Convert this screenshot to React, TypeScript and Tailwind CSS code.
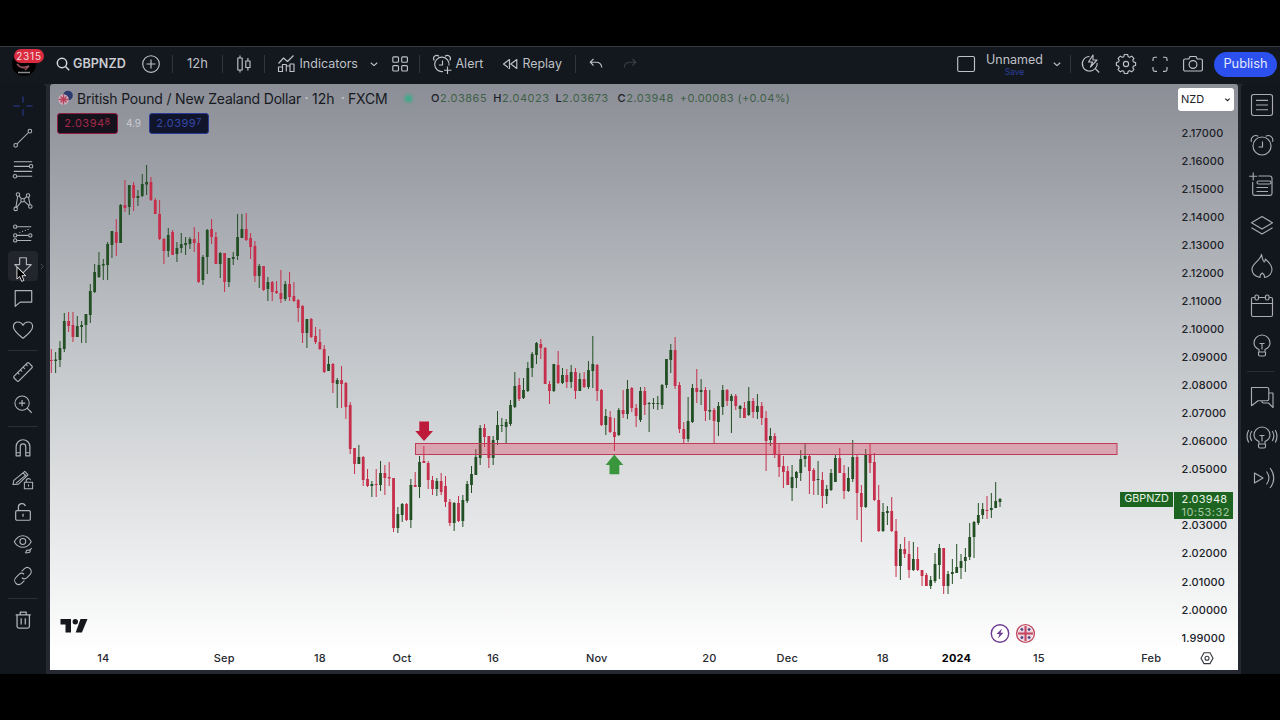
import type { ReactNode } from 'react'

// One candle per entry: direction (u = up, d = down), high, body top, body bottom, low
const CANDLES = `
d 349 360 361 373|u 352 359.5 361 373|u 341 348 360 367|u 313 321 349 352|d 312 321 326 332|d 312 325 337 342
u 316 326 337 337|u 321 325 327 343|u 314 314 325 343|u 284 291 315 323|u 264 272 292 293|u 252 265 277 278
u 259 264 265.5 280|u 242 244 265 280|u 231 231 245 258|d 219 232 243 256|u 204 205 243 243|d 180 205 208 212
u 185 185 207 215|d 182 185 198 211|u 190 196 198 206|u 174 184 196 197|u 165 182 184.5 195|d 177 182 200 201
d 198 200 214 214|d 200 214 239 240|d 238 239 251 264|u 228 235 251 257|d 230 232 255 255|u 242 248 254 262
u 233 244 248 253|u 237 243 245 255|u 237 239 244 249|d 227 239 243 252|d 232 243 282 283|u 255 257 280 285
u 229 230 257 274|d 219 229 237 244|d 232 237 264 264|u 252 253 264 278|d 253 253 282 292|u 258 258 282 287
u 252 257 259 265|u 214 237 256 260|u 214 229 238 238|d 213 229 240 241|d 233 238 247 259|d 241 246 276 282
u 264 266 276 288|d 266 266 290 291|u 277 282 289 301|d 281 282 292 301|d 281 291 293 294|d 270 293 299 303
u 281 284 299 301|d 272 284 297 301|d 282 296 301 302|d 299 300 308 322|d 305 306 333 343|u 319 319 333 348
d 318 319 337 338|d 327 336 342 344|d 329 342 349 350|d 345 349 372 373|u 356 364 371 371|d 363 364 383 393
u 378 380 384 408|d 366 380 384 408|d 382 383 407 419|d 402 405 449 454|d 448 448 464 474|u 445 457 464 464
d 456 457 480 486|d 469 479 486 487|u 481 484 486 497|d 469 484 485 497|u 461 473 485 491|d 465 473 478 495
d 462 477 478.5 486|d 478 478 528 532|u 507 514 528 533|u 503 504 515 522|d 503 504 520 521|u 479 485 520 528
d 472 485 487 487|u 456 462 487 498|d 446 461 463 463|d 461 463 480 489|d 476 480 489 495|u 478 481 489 496
d 473 481 492 495|d 476 486 502 507|d 499 502 523 526|u 502 503 523 531|d 496 503 521 522|u 495 500 521 527
u 481 484 501 503|u 466 474 485 493|u 449 457 475 475|u 425 428 458 465|d 424 428 437 447|d 436 436 458 468
u 436 440 458 465|u 411 425 440 445|u 418 425 426 432|u 419 422 427 443|u 400 405 424 426|u 372 386 407 408
d 378 385 399 401|u 378 390 398 399|u 362 368 391 392|u 352 354 368 377|u 342 343 355 364|d 339 344 348 359
d 347 348 384 384|d 381 384 391 404|u 364 364 391 392|d 351 365 383 384|u 368 375 383 384|d 369 375 382 388
u 365 372 382 388|d 368 372 391 399|u 373 379 391 391|d 372 379 387 388|u 361 370 387 389|u 336 364 371 388
d 364 365 391 401|d 389 390 425 426|u 409 416 425 435|d 411 417 432 433|d 418 432 437 451|u 408 410 435 436
d 390 410 414 418|u 380 389 414 419|d 387 388 408 412|d 404 408 416 427|u 387 391 420 422|d 387 391 405 415
u 402 403 404 432|u 398 403 404 409|u 396 403 404 410|u 384 385 405 409|u 359 359 385 388|u 344 350 360 373
d 337 350 386 389|d 382 385 429 433|d 422 429 439 444|u 397 421 439 442|u 384 388 422 423|d 369 388 392 403
u 379 390 392 405|d 387 390 411 421|u 390 410 411.5 420|d 408 410 421 443|u 402 406 422 436|u 385 390 407 415
d 389 390 401 406|u 394 396 401 433|d 394 396 406 410|u 405 406 409 418|d 402 408 418 418|u 387 401 415 416
d 398 401 412 418|u 394 406 412 419|d 402 406 418 425|d 411 418 441 471|u 428 436 440 446|d 433 436 455 458
d 444 454 467 477|d 456 466 472 488|d 466 471 485 485|u 465 477 488 501|u 471 472 478 488|u 450 459 473 481
u 444 456 459 467|d 455 456 471 494|d 468 470 481 495|u 461 479 480 495|d 472 480 496 508|u 485 489 496 504
u 469 473 490 491|u 454 458 482 482|d 448 458 473 473|d 465 473 491 499|u 467 478 491 492|u 440 457 479 482
d 455 457 493 520|d 485 493 507 542|u 449 454 507 508|d 443 454 463 473|d 453 462 500 501|d 485 500 531 532
u 503 512 531 532|u 506 511 513 525|d 497 511 531 532|d 519 531 566 577|u 544 549 566 580|d 537 549 554 558
d 541 554 570 578|u 542 559 570 571|d 547 559 570 571|d 570 570 576 586|d 573 575 586 586|u 576 580 586 589
u 553 564 581 583|u 544 548 565 579|d 548 548 586 594|u 571 574 586 594|u 559 572 574 584|u 544 567 573 573
u 554 561 568 579|u 548 557 561 572|u 523 537 557 560|u 521 522 537 558|u 503 515 523 525|u 503 509 515 519
d 496 510 511 519|u 493 508 510 518|u 482 501 508 508|u 498 499 502 507`
  .trim()
  .split(/[|\n]/)
  .map((row) => {
    const [dir, ...values] = row.split(' ')
    const [high, top, bottom, low] = values.map(Number)
    return { up: dir === 'u', high, top, bottom, low }
  })

const FIRST_X = 51.3
const STEP_X = 4.332

const PRICES = Array.from({ length: 19 }, (_, i) => (2.17 - i * 0.01).toFixed(5))

const DATES = [
  { x: 103.3, label: '14' },
  { x: 224.3, label: 'Sep' },
  { x: 320, label: '18' },
  { x: 402, label: 'Oct' },
  { x: 493.2, label: '16' },
  { x: 596.8, label: 'Nov' },
  { x: 709.5, label: '20' },
  { x: 787.3, label: 'Dec' },
  { x: 883, label: '18' },
  { x: 956.5, label: '2024', bold: true },
  { x: 1038.8, label: '15' },
  { x: 1151.3, label: 'Feb' },
]

const OHLC = [
  ['O', '2.03865'],
  ['H', '2.04023'],
  ['L', '2.03673'],
  ['C', '2.03948'],
]

interface IconProps {
  children: ReactNode
  className?: string
}

function Icon({ children, className = 'h-6 w-6' }: IconProps) {
  return (
    <svg
      viewBox="0 0 24 24"
      className={`shrink-0 overflow-visible ${className}`}
      fill="none"
      stroke="currentColor"
      strokeWidth={1.15}
      strokeLinejoin="round"
    >
      {children}
    </svg>
  )
}

const Chevron = () => <path d="M8.8 10.8 12 13.6l3.2-2.8" />

const Bulb = () => (
  <path d="M9 18v-2.400C6.300 14.300 4 12 4 9a8 8 0 0 1 16 0c0 3-2.300 5.300-5 6.600V18zM8.500 18v2.500c0 .8.7 1.500 1.500 1.500h4c.8 0 1.500-.7 1.500-1.500V18M12 15.500V9.500M9.500 9.500h5" />
)

const AlarmClock = () => (
  <>
    <circle cx="12" cy="13" r="9" />
    <path d="M12.500 8.500V14H8.500M1.500 8.800C0 4.500 4.500 1 8.300 3.300M22.500 8.800C24 4.500 19.500 1 15.700 3.300" />
  </>
)

const UnionJack = () => (
  <>
    <circle cx="12" cy="12" r="7.500" fill="#efd5dc" stroke="none" />
    <path d="M7.500 7l1.800 1.800M16.500 7l-1.800 1.800M7.500 17l1.800-1.800M16.500 17l-1.800-1.800" stroke="#4b4580" strokeWidth="2.400" />
    <path d="M12 4.500v15M4.500 12h15" stroke="#c4455f" strokeWidth="2" />
  </>
)

const LEFT_TOOLS: ReactNode[][] = [
  [
    <g key="cross" stroke="#2c3f94"><path d="M12 1.500v7M12 15.500v7M1.500 12h7M15.500 12h7" /></g>,
    <g key="line"><circle cx="4" cy="20" r="2" /><circle cx="19.500" cy="4.500" r="2" /><path d="M5.500 18.500 18 6" /></g>,
    <g key="fib"><path d="M2 3h20M2 8h17M2 13.500h20M5 18.800h17" strokeWidth="1.300" /><circle cx="20.800" cy="8" r="1.900" /><circle cx="3.200" cy="18.800" r="1.900" /></g>,
    <g key="pattern"><circle cx="6.500" cy="3.800" r="1.900" /><circle cx="17.500" cy="4.800" r="1.900" /><circle cx="11.500" cy="10" r="1.900" /><circle cx="4" cy="19.500" r="1.900" /><circle cx="20" cy="17" r="1.900" /><path d="M6.200 5.800 4.300 17.500M7.800 5.300l2.500 3.200M13 8.700l3-2.500M18 6.700l1.700 8.400M10.200 11.400l-5 6.500M13.200 11l5.200 4.700" /></g>,
    <g key="forecast"><circle cx="3.500" cy="4" r="1.800" /><circle cx="3.500" cy="13.500" r="1.800" /><circle cx="20" cy="13.500" r="1.800" /><circle cx="3.500" cy="19" r="1.800" /><path d="M5.500 4H21M5.500 13.500h12.500M5.500 19H21" /><path d="M8 10.500 20 6" strokeDasharray="1.200 2" /></g>,
    <g key="arrow"><path d="M8.300 3h7.400v7.500H21L12 19.500l-9-9h5.300z" strokeWidth="1.300" /></g>,
    <g key="note"><path d="M3.500 4h18v12.500H9L3.500 21z" strokeWidth="1.300" /></g>,
    <g key="heart"><path d="M12 21C7 17 1.500 13 1.500 8.200 1.500 5.300 3.700 3.300 6.500 3.300c2.300 0 4.300 1.300 5.500 3.600 1.200-2.300 3.200-3.600 5.500-3.600 2.800 0 5 2 5 4.900C22.500 13 17 17 12 21z" strokeWidth="1.300" /></g>,
  ],
  [
    <g key="ruler"><rect x="0.500" y="8.300" width="23" height="7.400" rx="1.500" transform="rotate(-45 12 12)" strokeWidth="1.300" /><path d="M6 12.500l2 2M9 9.500l2 2M12 6.500l2 2M15 3.500l2 2" /></g>,
    <g key="zoom"><circle cx="11" cy="11" r="7.800" /><path d="m16.500 16.500 5 5M11 7.500v7M7.500 11h7" strokeWidth="1.300" /></g>,
  ],
  [
    <g key="magnet"><path d="M4.500 20.500V10.500a7.500 7.500 0 0 1 15 0v10h-4.500V10.500a3 3 0 0 0-6 0v10zM4.500 17.200H9M15 17.200h4.500" strokeWidth="1.300" /></g>,
    <g key="pencil"><path d="m1 17 1-4.500L14 2.500l3.500 4L7 16.500zM4.500 15.500 15.500 6.500M12 4l3.500 4" /><rect x="13.500" y="14.500" width="9" height="7" /><path d="M15.500 14.500v-1.800a2.400 2.400 0 0 1 4.700-.5M18 17v2" /></g>,
    <g key="lock"><rect x="4" y="10.500" width="16" height="10.500" rx="1.500" strokeWidth="1.300" /><path d="M7 10.500V7a3.900 3.900 0 0 1 7.600-1.500M12 14v3.200" strokeWidth="1.400" /></g>,
    <g key="eye"><path d="M2.500 9.500C5 5 8.500 3 11.800 3S18.500 5 21 9.500c-2.500 4.500-6 6-9.200 6S5 14 2.500 9.500z" /><circle cx="11.800" cy="9.300" r="3.200" /><path d="m14.500 22 1.800-3.500 2.500.3 3-2.300M15.500 21.800l3.800-.8 1-2.300" /></g>,
    <g key="link"><path d="m10.500 7 2.800-2.700c2-2 4.800-1.800 6.500-.2 1.700 1.700 1.700 4.500-.2 6.400l-3.200 3.200c-1.500 1.500-4 1.600-5.600.2M13.500 17l-2.800 2.700c-2 2-4.800 1.800-6.500.2-1.700-1.700-1.700-4.500.2-6.400l3.200-3.200c1.500-1.500 4-1.600 5.600-.2" /></g>,
  ],
  [
    <g key="trash"><path d="M4 6.500h16.500M9 6.500V3.500h6.500v3M5.500 6.500v12.300c0 1.200.7 2 2 2H17c1.300 0 2-.8 2-2V6.500M10 10v7M14.500 10v7" strokeWidth="1.400" /></g>,
  ],
]

const RIGHT_TOOLS: ReactNode[][] = [
  [
    <g key="list"><rect x="1.500" y="1.500" width="21" height="21" rx="2.200" /><path d="M6 7.300h12M6 12h12M6 16.700h12" /></g>,
    <g key="alarm"><AlarmClock /></g>,
    <g key="news"><path d="M8.500 3h11c1.500 0 2.500 1 2.500 2.500v15c0 1-.8 1.800-1.800 1.800H4.500c-1 0-1.800-.8-1.800-1.800V9M3.200-.5v8M-.800 3.200h8" /><rect x="7" y="8" width="14" height="3" rx="1.500" /><path d="M6.500 14.500H18M6.500 18.500H18" /></g>,
    <g key="layers"><path d="m12 2.500 10.500 6.300L12 15.100 1.500 8.800zM1.500 13.800 12 20.100l10.500-6.300" /></g>,
    <g key="flame"><path d="M11.500.300c1 4 .5 5.500 2.800 7.700.8-.3 1-1.500 1-3 3 2.500 6.700 6 6.700 10.300 0 4.200-3 7.500-7.500 8.200.3-2-.5-3.500-2.300-4.500-1.700 1-2.500 2.500-2.200 4.500C5 22.500 2 19.500 2 15 2 9.500 10.500 6.500 11.500.300z" /></g>,
    <g key="calendar"><path d="M5 3.500H3c-1 0-1.500.5-1.500 1.500v16c0 1 .5 1.500 1.500 1.500h18c1 0 1.500-.5 1.500-1.500V5c0-1-.5-1.500-1.500-1.500H19M8.500 3.500h7M1.500 9.500h21" /><rect x="5" y="1" width="3.500" height="5" rx="1.500" /><rect x="15.500" y="1" width="3.500" height="5" rx="1.500" /></g>,
    <g key="bulb"><Bulb /></g>,
  ],
  [
    <g key="chat"><path d="M1.500 2.500H17c1 0 1.800.8 1.800 1.800v9.700c0 1-.8 1.700-1.800 1.700H8l-6.500 5zM19 8h4v14.500l-4.500-4.500h-5c-1 0-1.700-.7-1.700-1.700v-.6" /></g>,
    <g key="ideas"><Bulb /><path d="M1.800 5c-2 3-2 7 0 10M-1.200 4c-2.300 4-2.300 8.500 0 12.500M22.200 5c2 3 2 7 0 10M25.200 4c2.300 4 2.300 8.500 0 12.500" /></g>,
    <g key="stream"><path d="M4.500 7v10l8.500-5zM16.500 5.500c3 4 3 9 0 13M20 2c5 6 5 14 0 20" /></g>,
  ],
]

const Divider = ({ className = '' }: { className?: string }) => (
  <span className={`h-[18px] w-px shrink-0 bg-[#30343e] ${className}`} />
)

function TopBar() {
  return (
    <header className="flex h-[38px] items-center border-t border-[#383a3f] bg-[#13171e] pb-[3px] text-[13px] text-[#bfc1c6]">
      <div className="relative ml-3 h-6 w-6 shrink-0 rounded-full bg-black">
        <svg viewBox="0 0 24 24" className="h-6 w-6" fill="none">
          <path d="M5 12c3 4 6 4 12 2l-4 4M8 15l5 1" stroke="#9a5361" strokeWidth="1.500" />
          <path d="M6 20.500h12" stroke="#8e8e94" strokeWidth="1.500" />
        </svg>
        <span className="absolute -top-[3px] left-[2px] flex h-[14px] w-[30px] items-center justify-center rounded-full bg-[#d92c41] text-[10px] tracking-[0.8px] text-[#f6d9dd]">
          2315
        </span>
      </div>

      <Icon className="ml-[15px] h-6 w-6 text-[#d5d6da]">
        <circle cx="11" cy="11" r="4.700" strokeWidth="1.500" />
        <path d="m14.500 14.500 3.700 3.700" strokeWidth="1.500" />
      </Icon>
      <span className="-ml-[2px] w-[54px] text-[12.600px] font-semibold text-[#c9cbd0]">GBPNZD</span>
      <Icon className="ml-[12px] h-6 w-6">
        <circle cx="12" cy="12" r="8.300" />
        <path d="M12 7.500v9M7.500 12h9" />
      </Icon>
      <Divider className="ml-[9px]" />
      <span className="ml-[14px] w-[22.500px]">12h</span>
      <Divider className="ml-3" />
      <Icon className="ml-[9px] h-6 w-6">
        <rect x="5.800" y="6" width="4.400" height="12" />
        <rect x="13.800" y="9" width="4.200" height="6.500" />
        <path d="M8 3.500V6M8 18v2.500M15.900 6v3M15.900 15.500v3" />
      </Icon>
      <Divider className="ml-[8px]" />
      <Icon className="ml-[9px] h-6 w-6">
        <path d="M4.500 19.500V15h4v4.500zM8.500 19.500v-7h3.800v7M12.300 19.500V14h3.700v5.500M16 19.500V12h4v7.500zM4.500 11.500l5-5.500 4 3.500 6-6" />
      </Icon>
      <span className="ml-[2px] w-[58px] text-[12.500px]">Indicators</span>
      <Icon className="ml-1 h-6 w-6"><Chevron /></Icon>
      <Icon className="ml-[2px] h-6 w-6">
        <rect x="4.800" y="4.800" width="5.700" height="5.400" rx="1" />
        <rect x="13.700" y="4.800" width="5.700" height="5.400" rx="1" />
        <rect x="4.800" y="13.600" width="5.700" height="5.400" rx="1" />
        <rect x="13.700" y="13.600" width="5.700" height="5.400" rx="1" />
      </Icon>
      <Divider className="ml-[7px]" />
      <Icon className="ml-[10px] h-6 w-6">
        <path d="M13 19.500a7.200 7.200 0 1 1 6-6M4.200 8.500C2 5 6 1.800 9 4.300M19.800 8.500C22 5 18 1.800 15 4.300M12.500 8.500V13H9M17.500 14.500V22M14 18.200h7.500" />
      </Icon>
      <span className="ml-[2px] w-[29px] text-[12.500px]">Alert</span>
      <Icon className="ml-[14px] h-6 w-6">
        <path d="M10.500 7.500v9L4.500 12zM17.800 7.500v9L11.800 12z" />
      </Icon>
      <span className="w-[40px] text-[12.400px]">Replay</span>
      <Divider className="ml-[12px]" />
      <Icon className="ml-[8px] h-6 w-6">
        <path d="M9.500 7 6.200 10.200l3.300 3.300M6.200 10.200H12c3.500 0 5.500 2 5.800 5.300" />
      </Icon>
      <Icon className="ml-[10px] h-6 w-6 text-[#3b3f48]">
        <path d="m14.500 7 3.300 3.200-3.300 3.300M17.800 10.200H12c-3.500 0-5.500 2-5.800 5.300" />
      </Icon>

      <div className="ml-auto flex items-center">
        <Icon>
          <rect x="3.700" y="4.500" width="16.800" height="15" rx="1.500" />
        </Icon>
        <div className="ml-[8px] flex w-[57px] flex-col items-center">
          <span className="text-[12.500px] leading-[15px]">Unnamed</span>
          <span className="text-[8.500px] leading-[10px] text-[#2d409b]">Save</span>
        </div>
        <Icon className="ml-[2px] h-6 w-6"><Chevron /></Icon>
        <Divider className="ml-[1px]" />
        <Icon className="ml-[8px] h-6 w-6">
          <path d="M10.500 4.500A7.300 7.300 0 1 0 16.200 16.500l4 4M16.200 16.500c1.500-1.500 2.200-3.300 2-5.500M14 3 9.500 10h4L11.500 15l6.500-7h-4z" />
        </Icon>
        <Icon className="ml-[11px] h-6 w-6">
          <path d="m10.400 2.500h3.200l.6 2.200 1.500.6 2-1.100 2.200 2.200-1.100 2 .6 1.500 2.200.6v3l-2.200.6-.6 1.500 1.100 2-2.200 2.200-2-1.100-1.500.6-.6 2.200h-3.200l-.6-2.200-1.500-.6-2 1.100-2.200-2.200 1.100-2-.6-1.500-2.200-.6v-3l2.200-.6.6-1.500-1.100-2 2.200-2.200 2 1.100 1.500-.6z" />
          <circle cx="12" cy="12" r="2.600" />
        </Icon>
        <Icon className="ml-[10px] h-6 w-6">
          <path d="M5 9V7c0-1 .7-1.800 1.800-1.800H9M15 5.200h2.200C18.300 5.200 19 6 19 7v2M19 15v2.500c0 1-.7 1.800-1.800 1.800H15M9 19.300H6.800C5.700 19.300 5 18.500 5 17.500V15" />
        </Icon>
        <Icon className="ml-[9px] h-6 w-6">
          <path d="M4 7h3.800L9 4.500h6L16.200 7H20c.8 0 1.400.6 1.400 1.400v9.200c0 .8-.6 1.400-1.400 1.400H4c-.8 0-1.400-.6-1.400-1.400V8.400C2.600 7.600 3.200 7 4 7z" />
          <circle cx="12" cy="12.500" r="3.900" />
        </Icon>
        <button className="mr-[3px] ml-[9px] h-[25px] w-[63px] rounded-full bg-[#2b50ee] text-[12.800px] text-[#e3e9ff]">
          Publish
        </button>
      </div>
    </header>
  )
}

function LeftBar() {
  return (
    <aside className="flex w-[46px] shrink-0 flex-col rounded-tr bg-[#12161d] pt-[6px] text-[#b0b2b8]">
      {LEFT_TOOLS.map((group, g) => (
        <div key={g}>
          {g > 0 && <div className={`mx-2 h-px bg-[#2b2f38] ${g === 1 ? 'mt-[4px] mb-[5px]' : 'mt-[6px] mb-[5px]'}`} />}
          {group.map((tool, i) => {
            const active = g === 0 && i === 5
            return (
              <div key={i} className="relative flex h-8 items-center justify-center">
                <div className={`flex h-[30px] w-[30px] items-center justify-center rounded-sm ${active ? 'bg-[#22252c]' : ''}`}>
                  <Icon className="h-[22px] w-[22px]">{tool}</Icon>
                </div>
                {active && (
                  <>
                    <svg viewBox="0 0 6 10" className="absolute right-[2px] h-[7px] w-1" fill="none" stroke="#6b6e76">
                      <path d="m1 1 4 4-4 4" />
                    </svg>
                    {/* mouse pointer */}
                    <svg viewBox="0 0 12 18" className="absolute top-[16px] left-[16px] h-[17px] w-[11px]">
                      <path d="M1 1v13l3-2.800 2.200 5.300 2.500-1-2.200-5.200h4.200z" fill="#000" stroke="#e8e8e8" />
                    </svg>
                  </>
                )}
              </div>
            )
          })}
        </div>
      ))}
    </aside>
  )
}

function RightBar() {
  return (
    <aside className="flex w-[39px] shrink-0 flex-col rounded-tl bg-[#12161d] pt-[1px] text-[#a9abb1]">
      {RIGHT_TOOLS.map((group, g) => (
        <div key={g}>
          {g > 0 && <div className="mx-[6px] mt-[5px] mb-[5px] h-px bg-[#2b2f38]" />}
          {group.map((tool, i) => (
            <div key={i} className="flex h-[40.2px] items-center justify-center pl-[2px]">
              <Icon className="h-6 w-6">{tool}</Icon>
            </div>
          ))}
        </div>
      ))}
    </aside>
  )
}

function Candles() {
  return (
    <svg viewBox="50 84 1188 586" className="block h-full w-full">
      {CANDLES.map((c, i) => {
        const x = FIRST_X + i * STEP_X
        const color = c.up ? '#234f24' : '#c62f4b'
        return (
          <g key={i} fill={color}>
            <rect x={x - 0.5} y={c.high} width={1} height={c.low - c.high} />
            <rect x={x - 1.4} y={c.top} width={2.8} height={Math.max(1, c.bottom - c.top)} />
          </g>
        )
      })}

      {/* supply / demand zone */}
      <rect x="415.500" y="443.500" width="701.500" height="11" fill="#e0405f" fillOpacity=".34" stroke="#bf3c58" />
      <path d="M419.300 421.500H429V431h4l-9 10-8.700-10h4z" fill="#be1b3b" />
      <path d="M614.300 454.500l9 10.500h-4v9.300h-9.800V465h-3.900z" fill="#39963c" />

      {/* event badges */}
      <circle cx="1000" cy="633.500" r="8.700" fill="#fff" stroke="#6d3b91" strokeWidth="1.400" />
      <path d="m1002 628.500-5.500 5.500h3l-1.500 4.500 5.500-5.800h-3z" fill="#6d3b91" />
      <circle cx="1025.500" cy="633.500" r="8.900" fill="#fff" stroke="#bf4a63" strokeWidth="1.400" />
      <g transform="translate(1013.500 621.500)"><UnionJack /></g>

      {/* logo mark */}
      <g fill="#15171c">
        <path d="M60.500 619H71v13.500h-5.500V624.500h-5zM80.500 619H87.500l-5.600 13.500h-6.200z" />
        <circle cx="75.300" cy="621.800" r="2.700" />
      </g>

      <g fontSize="11" fill="#26282e" textAnchor="middle" className="font-[Inter,sans-serif]">
        {DATES.map((d) => (
          <text key={d.x} x={d.x} y="661.800" fontWeight={d.bold ? 700 : 500} letterSpacing=".2" fill={d.bold ? '#000' : undefined}>
            {d.label}
          </text>
        ))}
      </g>

      <g fill="none" stroke="#33363d" strokeWidth="1.100">
        <path d="M1204 652.800h6l3 5.400-3 5.400h-6l-3-5.400z" />
        <circle cx="1207" cy="658.200" r="2" />
      </g>
    </svg>
  )
}

function Legend() {
  return (
    <div className="absolute top-[5px] left-[7px]">
      <div className="flex h-[18px] items-center whitespace-nowrap">
        <svg viewBox="0 0 16 16" className="h-4 w-4">
          <circle cx="11" cy="5.500" r="4.800" fill="#2d3a70" />
          <circle cx="6.500" cy="9.500" r="5.300" fill="#c9b4c0" />
          <path d="M6.500 4.500v10M1.500 9.500h10M3.500 6.500l6 6M9.500 6.500l-6 6" stroke="#b8405c" strokeWidth="1.300" />
        </svg>
        <span className="ml-1 w-[224px] text-[14px] tracking-[-0.18px] text-[#17191f]">British Pound / New Zealand Dollar</span>
        <span className="w-[11px] text-center text-[#c4c6ca]">·</span>
        <span className="w-[25.500px] text-[14px] text-[#17191f]">12h</span>
        <span className="w-[10.500px] text-center text-[#c4c6ca]">·</span>
        <span className="w-[39px] text-[14px] tracking-[-0.2px] text-[#17191f]">FXCM</span>
        <span className="ml-[18px] h-[7px] w-[7px] rounded-full bg-[#4aa78c] ring-3 ring-[#4aa78c]/20" />
        <div className="ml-[19px] flex text-[11px] text-[#3e6047]">
          {OHLC.map(([name, value]) => (
            <span key={name} className="w-[62.2px] tracking-[0.5px]">
              <span className="font-medium text-[#1d2026]">{name}</span>
              {value}
            </span>
          ))}
          <span className="tracking-[0.38px]">+0.00083 (+0.04%)</span>
        </div>
      </div>
      <div className="mt-[6px] flex h-[21px] items-center text-[11px]">
        <span className="flex h-full w-[61px] items-center justify-center rounded-[3px] border border-[#8d1f41] bg-[#15121c] tracking-[0.5px] text-[#a3284a]">
          2.0394<sup className="top-[-2px] text-[9px]">8</sup>
        </span>
        <span className="w-[31px] text-center text-[10px] text-[#c9cbd0]">4.9</span>
        <span className="flex h-full w-[60px] items-center justify-center rounded-[3px] border border-[#283a94] bg-[#11152b] tracking-[0.5px] text-[#3647a8]">
          2.0399<sup className="top-[-2px] text-[9px]">7</sup>
        </span>
      </div>
    </div>
  )
}

function PriceScale() {
  return (
    <div className="absolute top-0 right-0 w-[64px] pt-[35px] text-[11px] text-[#202228]">
      {PRICES.map((p) => (
        <div key={p} className="flex h-[28.060px] items-center pl-[7.500px] font-medium tracking-[0.1px]">
          {p}
        </div>
      ))}
      <div className="absolute top-[4px] right-[4px] flex h-[23px] w-[56px] items-center justify-between rounded-[3px] bg-white pr-[3px] pl-[3px]">
        <span>NZD</span>
        <svg viewBox="0 0 8 8" className="h-[7px] w-[7px]" fill="none" stroke="#222" strokeWidth="1.300">
          <path d="m1.500 3 2.500 2.300L6.500 3" />
        </svg>
      </div>
      <div className="absolute top-[408px] right-[5px] flex items-start text-[#e9f3e9]">
        <span className="flex h-[15px] w-[53px] items-center justify-center bg-[#1c641f] text-[10.800px]">GBPNZD</span>
        <div className="ml-px flex h-[27px] w-[59px] flex-col bg-[#1c641f] pt-[1px] pl-[7.500px] text-[11px] leading-[13px]">
          <span className="tracking-[0.25px]">2.03948</span>
          <span className="tracking-[0.45px] text-[#a5c8a6]">10:53:32</span>
        </div>
      </div>
    </div>
  )
}

export default function App() {
  return (
    <div className="flex h-[720px] w-[1280px] flex-col overflow-hidden bg-black pt-[46px] font-[Inter,'Noto_Sans',sans-serif]">
      <TopBar />
      <div className="flex h-[590px] bg-[#252830]">
        <LeftBar />
        <main className="relative mr-[3px] ml-[4px] h-[586px] w-[1188px] rounded-t-[3px] bg-linear-to-b from-[#8b8e96] via-[#c8cbce] via-50% to-white to-[97%]">
          <Candles />
          <Legend />
          <PriceScale />
        </main>
        <RightBar />
      </div>
    </div>
  )
}
